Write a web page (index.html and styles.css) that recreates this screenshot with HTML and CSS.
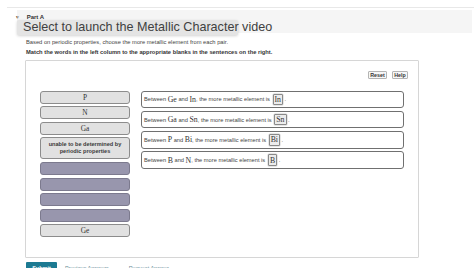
FILE: index.html
```html
<!DOCTYPE html>
<html>
<head>
<meta charset="utf-8">
<link rel="stylesheet" href="styles.css">
</head>
<body>
<div class="page">
  <div class="topline"></div>
  <div class="part">
    <span class="caret">&#9660;</span>
    <span class="part-title">Part A</span>
    <div class="video-band"></div>
    <div class="video-tip">Select to launch the Metallic Character video</div>
  </div>
  <p class="intro">Based on periodic properties, choose the more metallic element from each pair.</p>
  <p class="instr">Match the words in the left column to the appropriate blanks in the sentences on the right.</p>
  <div class="panel">
    <div class="toolbar">
      <button class="tbtn reset">Reset</button>
      <button class="tbtn help">Help</button>
    </div>
    <div class="work">
      <div class="bank">
        <div class="tile"><span class="el">P</span></div>
        <div class="tile"><span class="el">N</span></div>
        <div class="tile"><span class="el">Ga</span></div>
        <div class="tile tall">unable to be determined by<br>periodic properties</div>
        <div class="tile empty"></div>
        <div class="tile empty"></div>
        <div class="tile empty"></div>
        <div class="tile empty"></div>
        <div class="tile"><span class="el">Ge</span></div>
      </div>
      <div class="sentences">
        <div class="sent">Between <span class="el">Ge</span> and <span class="el">In</span>, the more metallic element is <span class="chip el">In</span> .</div>
        <div class="sent">Between <span class="el">Ga</span> and <span class="el">Sn</span>, the more metallic element is <span class="chip el">Sn</span> .</div>
        <div class="sent">Between <span class="el">P</span> and <span class="el">Bi</span>, the more metallic element is <span class="chip el">Bi</span> .</div>
        <div class="sent">Between <span class="el">B</span> and <span class="el">N</span>, the more metallic element is <span class="chip el">B</span> .</div>
      </div>
    </div>
  </div>
  <div class="actions">
    <button class="submit">Submit</button>
    <span class="link">Previous Answers</span>
    <span class="link">Request Answer</span>
  </div>
</div>
</body>
</html>
```

FILE: styles.css
```css
* { box-sizing: border-box; }
html, body { margin: 0; padding: 0; background: #fff; }
body {
  font-family: "Liberation Sans", Arial, sans-serif;
  color: #333;
  width: 474px;
  height: 268px;
  overflow: hidden;
}
.page { padding-top: 7px; }
.topline {
  margin-left: 7px;
  border-top: 1px solid #e8e8e8;
  height: 0;
}
.part {
  position: relative;
  height: 29.5px;
  padding-left: 15px;
  padding-top: 5.5px;
  font-size: 6px;
  line-height: 6px;
  font-weight: bold;
  color: #333;
}
.caret { font-size: 5px; display: inline-block; width: 10px; }
.part-title { position: relative; z-index: 2; }
.video-band {
  position: absolute;
  left: 17px;
  top: 2px;
  width: 455px;
  height: 23px;
  background: rgba(236, 236, 236, 0.55);
  z-index: 1;
}
.video-tip {
  position: absolute;
  left: 17px;
  top: 11.5px;
  width: 221px;
  height: 15px;
  padding-left: 6px;
  background: #e4e4e4;
  border-radius: 2px;
  box-shadow: 0 1px 3px rgba(0,0,0,0.18);
  font-size: 12.6px;
  line-height: 15px;
  font-weight: normal;
  color: #404040;
  z-index: 3;
  white-space: nowrap;
}
.intro {
  margin: 0 0 0 26px;
  font-size: 5.75px;
  line-height: 8px;
  color: #444;
  white-space: nowrap;
}
.instr {
  margin: 2.8px 0 0 26px;
  font-size: 5.75px;
  line-height: 8px;
  font-weight: bold;
  color: #333;
  white-space: nowrap;
}
.panel {
  margin: 3.7px 0 0 25px;
  width: 394px;
  height: 198px;
  border: 1px solid #d6d6d6;
  border-radius: 1px;
  padding: 9.7px 14px 0 14px;
}
.toolbar {
  display: flex;
  justify-content: flex-end;
  gap: 5px;
  margin-right: -4px;
  height: 8px;
}
.tbtn {
  font-family: "Liberation Sans", Arial, sans-serif;
  font-size: 5.3px;
  font-weight: bold;
  color: #333;
  background: #f7f7f7;
  border: 1px solid #b4b4b4;
  border-radius: 1px;
  height: 8px;
  padding: 0;
  line-height: 6px;
}
.reset { width: 19px; }
.help { width: 16px; }
.work {
  display: flex;
  gap: 11px;
  margin-top: 12px;
}
.bank {
  width: 90px;
  display: flex;
  flex-direction: column;
  gap: 2.6px;
}
.tile {
  height: 13px;
  border: 1px solid #8c8c8c;
  border-radius: 3px;
  background: #e1e1e1;
  display: flex;
  align-items: center;
  justify-content: center;
  text-align: center;
  color: #333;
}
.tile .el { font-size: 7.4px; }
.tile.tall {
  height: 22px;
  font-size: 5.6px;
  font-weight: bold;
  line-height: 7.8px;
  color: #3a3a3a;
}
.tile.empty {
  background: #9896ad;
  border-color: #7c7a8e;
}
.el {
  font-family: "Liberation Serif", "Times New Roman", serif;
  font-size: 7.8px;
  color: #333;
}
.sentences {
  width: 263px;
  display: flex;
  flex-direction: column;
  gap: 2.6px;
}
.sent {
  height: 17.6px;
  border: 1px solid #707070;
  border-radius: 3px;
  padding-left: 2px;
  display: flex;
  align-items: center;
  white-space: pre;
  font-size: 5.7px;
  color: #444;
}
.chip {
  display: inline-flex;
  align-items: center;
  justify-content: center;
  height: 11.5px;
  min-width: 9.5px;
  padding: 0 1px;
  margin-left: 1px;
  border: 1px solid #8a8a8a;
  border-radius: 1px;
  background: #ececec;
  box-shadow: 0 0 0 0.5px #d0d0d0;
}
.actions {
  margin: 4.5px 0 0 26px;
  display: flex;
  align-items: flex-start;
  gap: 8px;
  font-size: 5.5px;
}
.submit {
  width: 31px;
  height: 12px;
  background: #1c7a92;
  border: none;
  border-radius: 1px;
  color: #fff;
  font-family: "Liberation Sans", Arial, sans-serif;
  font-size: 5.5px;
  font-weight: bold;
  padding: 0;
}
.link { color: #6a8d99; margin-top: 3px; }
.link + .link { margin-left: 12px; }
```
